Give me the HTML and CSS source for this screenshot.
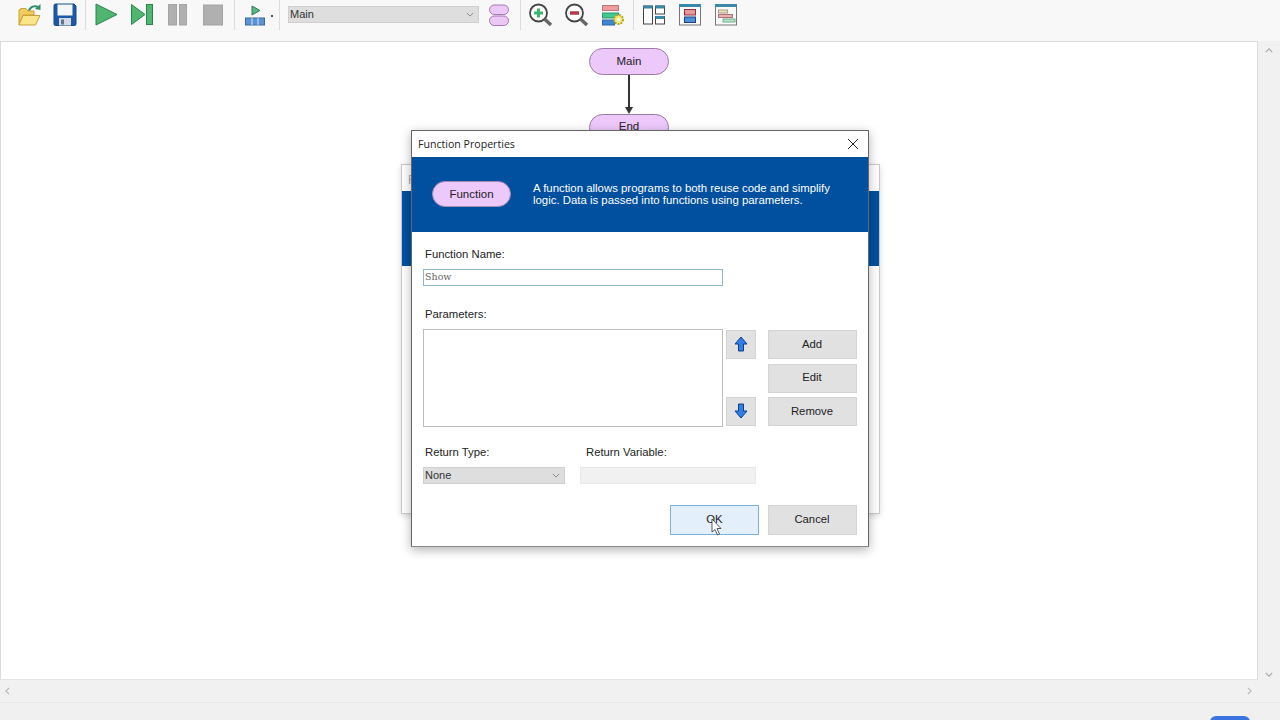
FILE: index.html
```html
<!DOCTYPE html>
<html lang="en">
<head>
<meta charset="utf-8">
<title>Function Properties</title>
<link rel="stylesheet" href="styles.css">
</head>
<body>
<div class="app">
  <header class="toolbar">
    <div class="group">
      <svg class="icon" viewBox="0 0 24 24"><path d="M12 10A6 6 0 0 1 21.500 6.500" fill="none" stroke="#2f8f6b" stroke-width="2"/><path d="M23.500 3L23.500 9L18 8Z" fill="#2f8f6b"/><path d="M2 24L2 9L4 7.500L9 7.500L11 10L17 10L17 14L6 14Z" fill="#f2cd5c" stroke="#c9a13a"/><path d="M2 24L6 14.500L23 14.500L18.500 24Z" fill="#fbe58a" stroke="#c9a13a"/></svg>
      <svg class="icon" viewBox="0 0 24 24"><path d="M1 4.500Q1 3 2.500 3L21 3L23 5L23 23Q23 24.500 21.500 24.500L2.500 24.500Q1 24.500 1 23Z" fill="#1d57a8" stroke="#164a8c"/><rect x="4.500" y="3.500" width="15" height="11" fill="#f3f6fa"/><rect x="6" y="17" width="12" height="7.500" fill="#d5dae2"/><rect x="8" y="18.500" width="3" height="5" fill="#5f7590"/></svg>
    </div>
    <span class="sep"></span>
    <div class="group">
      <svg class="icon" viewBox="0 0 24 24"><path d="M2 3L23 13.500L2 24Z" fill="#4fb56f" stroke="#2c8550"/></svg>
      <svg class="icon" viewBox="0 0 24 24"><path d="M1.500 3.500L15 13.500L1.500 23.500Z" fill="#4fb56f" stroke="#2c8550"/><rect x="16.500" y="3.500" width="6" height="20" fill="#4fb56f" stroke="#2c8550"/></svg>
      <svg class="icon" viewBox="0 0 24 24"><rect x="2.500" y="3.500" width="8" height="20.500" fill="#b0b0b0" stroke="#a4a4a4"/><rect x="13.500" y="3.500" width="7" height="20.500" fill="#b0b0b0" stroke="#a4a4a4"/></svg>
      <svg class="icon" viewBox="0 0 24 24"><rect x="1.500" y="4" width="19" height="20" fill="#b0b0b0" stroke="#a4a4a4"/></svg>
    </div>
    <span class="sep"></span>
    <div class="group">
      <svg class="icon" viewBox="0 0 24 24"><path d="M9 5L17 9.500L9 14Z" fill="#5fb57f" stroke="#2f7f5f"/><rect x="2.500" y="17" width="19" height="7" fill="#5b93d3" stroke="#3a6a9a"/><path d="M9 17V24M15 17V24" stroke="#dbe7f3"/></svg>
    </div>
    <span class="dropdot"></span>
    <span class="sep sep-tight"></span>
    <div class="select toolbar-select"><span>Main</span><svg class="chev" viewBox="0 0 10 6"><path d="M1 1L5 5L9 1" fill="none" stroke="#777"/></svg></div>
    <svg class="icon pills" viewBox="0 0 24 24"><rect x="1.500" y="4" width="19" height="9.500" rx="4.700" fill="#ecc8f6" stroke="#a577b5"/><rect x="1.500" y="15" width="19" height="9.500" rx="4.700" fill="#ecc8f6" stroke="#a577b5"/></svg>
    <span class="sep"></span>
    <div class="group">
      <svg class="icon" viewBox="0 0 24 24"><circle cx="9.500" cy="12" r="8.500" fill="#fff" stroke="#444" stroke-width="1.800"/><path d="M15.500 18L22 24" stroke="#666" stroke-width="3.500"/><path d="M9.500 7.500V16.500M5 12H14" stroke="#3fb56f" stroke-width="3"/></svg>
      <svg class="icon" viewBox="0 0 24 24"><circle cx="9.500" cy="12" r="8.500" fill="#fff" stroke="#444" stroke-width="1.800"/><path d="M15.500 18L22 24" stroke="#666" stroke-width="3.500"/><path d="M5 12H14" stroke="#b53a45" stroke-width="3.500"/></svg>
      <svg class="icon" viewBox="0 0 24 24"><rect x="1.500" y="4.500" width="16" height="5" fill="#ee9c9c" stroke="#b77"/><rect x="1.500" y="12" width="16" height="5" fill="#3fc88f" stroke="#2a9a6f"/><rect x="1.500" y="19" width="12" height="5" fill="#3f86d3" stroke="#2d6aa8"/><circle cx="17.500" cy="18.500" r="4.500" fill="#f4ee7a" stroke="#b3a62d" stroke-width="2" stroke-dasharray="2 1"/><circle cx="17.500" cy="18.500" r="1.500" fill="#fff"/></svg>
    </div>
    <span class="sep"></span>
    <div class="group">
      <svg class="icon" viewBox="0 0 24 24"><rect x="1.500" y="5" width="9" height="18" fill="#fff" stroke="#444"/><rect x="1.500" y="4.500" width="9" height="3" fill="#3d87a8"/><rect x="13.500" y="5" width="9" height="8" fill="#fff" stroke="#444"/><rect x="13.500" y="4.500" width="9" height="3" fill="#3d87a8"/><rect x="13.500" y="15.500" width="9" height="7.500" fill="#fff" stroke="#444"/><rect x="13.500" y="15" width="9" height="3" fill="#3d87a8"/></svg>
      <svg class="icon" viewBox="0 0 24 24"><rect x="1.500" y="3.500" width="21" height="20.500" fill="#fafafa" stroke="#777"/><rect x="1" y="3" width="22" height="3" fill="#3d87a8"/><rect x="6.500" y="8.500" width="11" height="5.500" fill="#e59a9a" stroke="#8f2f3f"/><rect x="6.500" y="16" width="11" height="5.500" fill="#4d8fd8" stroke="#1f3f80"/></svg>
      <svg class="icon" viewBox="0 0 24 24"><rect x="1.500" y="3.500" width="21" height="20.500" fill="#fafafa" stroke="#777"/><rect x="1" y="3" width="22" height="3" fill="#3d87a8"/><rect x="4.500" y="9" width="9" height="3" fill="#f0e6a0" stroke="#a99"/><rect x="4.500" y="13.500" width="14" height="3" fill="#eeb0b0" stroke="#a77"/><rect x="9" y="18" width="12" height="3" fill="#b5e8c0" stroke="#7a9"/></svg>
    </div>
  </header>

  <div class="workspace">
    <main class="canvas">
      <div class="node node-main">Main</div>
      <svg class="connector" viewBox="0 0 10 40"><path d="M5 0V34" stroke="#333" stroke-width="2"/><path d="M1 32H9L5 39Z" fill="#333"/></svg>
      <div class="node node-end">End</div>
    </main>
    <aside class="vscroll">
      <svg class="arrow" viewBox="0 0 10 6"><path d="M1 5L5 1L9 5" fill="none" stroke="#aaa" stroke-width="1.500"/></svg>
      <svg class="arrow" viewBox="0 0 10 6"><path d="M1 1L5 5L9 1" fill="none" stroke="#aaa" stroke-width="1.500"/></svg>
    </aside>
  </div>
  <div class="hscroll">
    <svg class="arrow-h" viewBox="0 0 6 10"><path d="M5 1L1 5L5 9" fill="none" stroke="#bbb" stroke-width="1.500"/></svg>
    <svg class="arrow-h" viewBox="0 0 6 10"><path d="M1 1L5 5L1 9" fill="none" stroke="#bbb" stroke-width="1.500"/></svg>
  </div>
  <footer class="statusbar"><span class="status-pill"></span></footer>

  <div class="window window-back">
    <div class="back-title">F</div>
    <div class="back-band"></div>
  </div>

  <section class="window window-front">
    <div class="titlebar">
      <span>Function Properties</span>
      <svg class="close" viewBox="0 0 10 10"><path d="M0 0L10 10M10 0L0 10" stroke="#222" stroke-width="1"/></svg>
    </div>
    <div class="band">
      <div class="band-pill">Function</div>
      <p class="band-text">A function allows programs to both reuse code and simplify logic. Data is passed into functions using parameters.</p>
    </div>
    <div class="form">
      <label class="label">Function Name:</label>
      <div class="input">Show</div>
      <label class="label label-params">Parameters:</label>
      <div class="params-row">
        <div class="listbox"></div>
        <div class="move-col">
          <button class="btn btn-icon"><svg class="move" viewBox="0 0 14 16"><path d="M7 1L13 8H9.500V15H4.500V8H1Z" fill="#2f7fe8" stroke="#123f80"/></svg></button>
          <button class="btn btn-icon"><svg class="move" viewBox="0 0 14 16"><path d="M7 15L13 8H9.500V1H4.500V8H1Z" fill="#2f7fe8" stroke="#123f80"/></svg></button>
        </div>
        <div class="action-col">
          <button class="btn btn-wide">Add</button>
          <button class="btn btn-wide">Edit</button>
          <button class="btn btn-wide">Remove</button>
        </div>
      </div>
      <div class="return-row">
        <div class="return-type">
          <label class="label">Return Type:</label>
          <div class="select dialog-select"><span>None</span><svg class="chev" viewBox="0 0 10 6"><path d="M1 1L5 5L9 1" fill="none" stroke="#777"/></svg></div>
        </div>
        <div class="return-var">
          <label class="label">Return Variable:</label>
          <div class="field-disabled"></div>
        </div>
      </div>
      <div class="footer-row">
        <button class="btn btn-wide btn-ok">OK</button>
        <button class="btn btn-wide">Cancel</button>
      </div>
    </div>
    <svg class="cursor" viewBox="0 0 11 18"><path d="M1 1V14L4 11.500L6.500 17L8.500 16L6 10.500H10Z" fill="#fff" stroke="#333" stroke-width="0.800"/></svg>
  </section>
</div>
</body>
</html>
```
FILE: styles.css
```css
* { box-sizing: border-box; }
html, body { margin: 0; height: 100%; }
body { font-family: "Liberation Sans", Arial, sans-serif; font-size: 12px; color: #222; background: #f0f0f0; overflow: hidden; }

.app { position: relative; width: 1280px; height: 720px; display: flex; flex-direction: column; }

.toolbar { height: 41px; flex: none; display: flex; align-items: flex-start; padding-left: 17px; background: #f8f8f8; }
.group { display: flex; gap: 12px; align-items: flex-start; margin-top: -1px; }
.icon { width: 24px; height: 28px; flex: none; display: block; }
.sep { width: 1px; height: 30px; background: #dcdcdc; margin: 0 8px; flex: none; }
.sep-tight { margin-left: 6px; margin-right: 7px; }
.dropdot { width: 2px; height: 2px; margin: 15px 0 0 4px; background: #555; flex: none; }
.pills { margin: -1px 0 0 9px; }

.select { display: flex; align-items: center; justify-content: space-between; background: #dedede; border: 1px solid #cfcfcf; color: #333; font-size: 11px; padding: 0 4px 1px 1px; }
.toolbar-select { width: 191px; height: 17px; margin: 6px 0 0 1px; flex: none; }
.chev { width: 8px; height: 5px; }

.workspace { flex: 1; display: flex; min-height: 0; }
.canvas { position: relative; flex: 1; background: #fff; border: 1px solid #dcdcdc; border-bottom-color: #e4e4e4; }
.vscroll { width: 22px; flex: none; display: flex; flex-direction: column; justify-content: space-between; align-items: center; padding: 7px 0 3px; background: #f1f1f1; }
.arrow { width: 8px; height: 5px; }

.node { position: absolute; width: 80px; height: 27px; display: flex; align-items: center; justify-content: center; background: #ecc8fb; border: 1px solid #9a7aa6; border-radius: 14px; color: #222; font-size: 11.500px; padding-bottom: 1px; }
.node-main { left: 588px; top: 6px; }
.node-end { left: 588px; top: 72px; padding-bottom: 3px; }
.connector { position: absolute; left: 622.500px; top: 33px; width: 10px; height: 40px; }

.hscroll { height: 23px; flex: none; display: flex; justify-content: space-between; align-items: center; padding: 0 28px 0 5px; background: #f1f1f1; border-bottom: 1px solid #e8e8e8; }
.arrow-h { width: 5px; height: 8px; }
.statusbar { height: 17px; flex: none; display: flex; justify-content: flex-end; padding: 13px 30px 0 0; background: #f0f0f0; overflow: hidden; }
.status-pill { width: 40px; height: 12px; border-radius: 8px; background: #3a74e0; }

.window { position: absolute; background: #fff; }
.window-back { left: 401px; top: 164px; width: 479px; height: 350px; border: 1px solid #c9c9c9; box-shadow: 0 2px 6px rgba(0,0,0,.15); }
.back-title { height: 26px; padding: 8px 0 0 6px; color: #aaa; font-size: 12px; }
.back-band { height: 75px; background: #0050a0; }

.window-front { left: 411px; top: 130px; width: 458px; height: 417px; display: flex; flex-direction: column; border: 1px solid #666; border-bottom-color: #888; box-shadow: 0 3px 10px rgba(0,0,0,.3); }
.titlebar { height: 26px; flex: none; display: flex; align-items: center; justify-content: space-between; padding: 0 10px 0 6px; font-family: "Open Sans", sans-serif; font-size: 10.600px; color: #222; }
.close { width: 10px; height: 10px; }

.band { height: 75px; flex: none; display: flex; align-items: center; padding-left: 20px; background: #0050a0; }
.band-pill { width: 79px; height: 26px; margin-top: -2px; flex: none; display: flex; align-items: center; justify-content: center; border-radius: 13px; background: #ecc8fb; border: 1px solid #a98ab5; color: #222; font-size: 11.500px; }
.band-text { margin: -1px 0 0 22px; width: 315px; color: #fff; font-size: 11.400px; line-height: 12.500px; }

.form { flex: 1; display: flex; flex-direction: column; padding: 15px 11px 11px 11px; }
.label { display: block; height: 14px; line-height: 14px; padding-left: 2px; color: #222; font-size: 11.300px; }
.label-params { margin-top: 21px; }
.input { width: 300px; height: 17px; margin-top: 8px; padding-left: 1px; line-height: 14px; border: 1px solid #8fb6c4; font-family: "DejaVu Serif", serif; font-size: 9.500px; color: #666; }

.params-row { display: flex; height: 98px; margin-top: 8px; }
.listbox { width: 300px; flex: none; border: 1px solid #bdbdbd; background: #fff; }
.move-col { width: 30px; margin: 1px 0 0 3px; flex: none; display: flex; flex-direction: column; justify-content: space-between; height: 96px; }
.action-col { width: 89px; margin: 1px 0 0 12px; flex: none; display: flex; flex-direction: column; justify-content: space-between; height: 96px; }

.btn { display: flex; align-items: center; justify-content: center; padding: 0 1px 2px 0; border: 1px solid #d4d4d4; background: #e1e1e1; color: #222; font-family: "Liberation Sans", Arial, sans-serif; font-size: 11.300px; }
.btn-icon { width: 30px; height: 29px; }
.btn-wide { width: 89px; height: 29px; }
.move { width: 14px; height: 16px; }

.return-row { display: flex; margin-top: 18px; }
.return-type { width: 157px; flex: none; }
.dialog-select { width: 142px; height: 17px; margin-top: 8px; }
.return-var { width: 176px; flex: none; }
.return-var .label { padding-left: 6px; }
.field-disabled { height: 17px; margin-top: 8px; background: #f1f1f1; border: 1px solid #e8e8e8; }

.footer-row { display: flex; justify-content: flex-end; gap: 9px; margin-top: 21px; }
.footer-row .btn { height: 30px; }
.footer-row .btn-ok { padding: 0 0 2px; background: #e3effa; border-color: #7fb0d8; }

.cursor { position: absolute; left: 299px; top: 387px; width: 11px; height: 18px; }
```
